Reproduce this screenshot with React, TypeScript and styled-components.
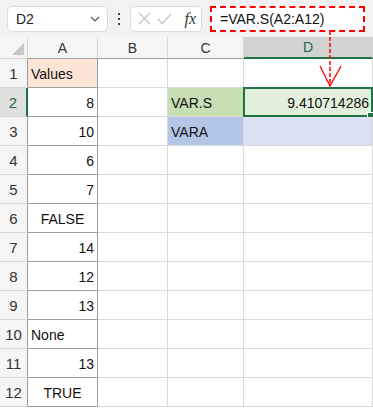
import React, { FC } from "react";
import styled, { createGlobalStyle } from "styled-components";

const GlobalStyle = createGlobalStyle`
  html, body {
    margin: 0;
    padding: 0;
    background: #ffffff;
  }
  body {
    font-family: "Liberation Sans", Arial, sans-serif;
    width: 373px;
    height: 408px;
    overflow: hidden;
  }
`;

type Align = "left" | "right" | "center";

interface CellData {
  text?: string;
  align?: Align;
  bg?: string;
}

const columns = ["A", "B", "C", "D"];
const colWidths = [28, 70, 70, 76, 129];

const rows: CellData[][] = [
  [{ text: "Values", align: "left", bg: "#fce4d6" }, {}, {}, {}],
  [{ text: "8", align: "right" }, {}, { text: "VAR.S", align: "left", bg: "#c6e0b4" }, { text: "9.410714286", align: "right", bg: "#e2efda" }],
  [{ text: "10", align: "right" }, {}, { text: "VARA", align: "left", bg: "#b4c6e7" }, { bg: "#d9e1f2" }],
  [{ text: "6", align: "right" }, {}, {}, {}],
  [{ text: "7", align: "right" }, {}, {}, {}],
  [{ text: "FALSE", align: "center" }, {}, {}, {}],
  [{ text: "14", align: "right" }, {}, {}, {}],
  [{ text: "12", align: "right" }, {}, {}, {}],
  [{ text: "13", align: "right" }, {}, {}, {}],
  [{ text: "None", align: "left" }, {}, {}, {}],
  [{ text: "13", align: "right" }, {}, {}, {}],
  [{ text: "TRUE", align: "center" }, {}, {}, {}],
];

const App: FC = () => {
  return (
    <>
      <GlobalStyle />
      <Page>
        <Toolbar>
          <NameBox>
            <span>D2</span>
            <svg width="10" height="6" viewBox="0 0 10 6">
              <path d="M1 1 L5 5 L9 1" fill="none" stroke="#555" strokeWidth="1.2" />
            </svg>
          </NameBox>
          <Dots>
            <i />
            <i />
            <i />
          </Dots>
          <FxBox>
            <svg width="13" height="13" viewBox="0 0 13 13">
              <path d="M1 1 L12 12 M12 1 L1 12" stroke="#c4c4c4" strokeWidth="1.2" />
            </svg>
            <svg width="15" height="12" viewBox="0 0 15 12">
              <path d="M1 6 L5 10.5 L14 1" fill="none" stroke="#c4c4c4" strokeWidth="1.2" />
            </svg>
            <Fx>fx</Fx>
          </FxBox>
          <FormulaBox>=VAR.S(A2:A12)</FormulaBox>
        </Toolbar>

        <Sheet>
          <Corner />
          {columns.map((c) => (
            <ColHeader key={c} $selected={c === "D"}>
              {c}
            </ColHeader>
          ))}
          {rows.map((row, r) => (
            <React.Fragment key={r}>
              <RowHeader $selected={r === 1}>{r + 1}</RowHeader>
              {row.map((cell, c) => (
                <Cell
                  key={c}
                  $align={cell.align || "left"}
                  $bg={cell.bg}
                  $boxed={c === 0}
                  $active={r === 1 && c === 3}
                >
                  {cell.text}
                  {r === 1 && c === 3 ? <FillHandle /> : null}
                </Cell>
              ))}
            </React.Fragment>
          ))}
        </Sheet>

        <Arrow width="30" height="58" viewBox="0 0 30 58">
          <path d="M11 0 L11 55" stroke="#ff0000" strokeWidth="1.5" strokeDasharray="4 2" />
          <path d="M1 35 L11 55 L22 35" fill="none" stroke="#ff0000" strokeWidth="1.3" />
        </Arrow>
      </Page>
    </>
  );
};

const Page = styled("div")`
  position: relative;
  width: 373px;
  height: 408px;
  overflow: hidden;
`;

const Toolbar = styled("div")`
  display: flex;
  align-items: center;
  height: 37px;
  padding: 0 8px 0 7px;
  box-sizing: border-box;
  background: #f2f2f2;
`;

const NameBox = styled("div")`
  display: flex;
  align-items: center;
  justify-content: space-between;
  width: 101px;
  height: 26px;
  box-sizing: border-box;
  padding: 0 7px 0 8px;
  background: #ffffff;
  border: 1px solid #dcdcdc;
  border-radius: 5px;
  font-size: 14px;
  color: #222;
`;

const Dots = styled("div")`
  display: flex;
  flex-direction: column;
  align-items: center;
  gap: 3px;
  width: 22px;
  i {
    display: block;
    width: 2px;
    height: 2px;
    background: #444;
  }
`;

const FxBox = styled("div")`
  display: flex;
  align-items: center;
  gap: 6px;
  width: 72px;
  height: 26px;
  box-sizing: border-box;
  padding: 0 5px 0 7px;
  background: #ffffff;
  border: 1px solid #dcdcdc;
  border-radius: 5px;
`;

const Fx = styled("span")`
  margin-left: auto;
  font-family: "Liberation Serif", "Times New Roman", serif;
  font-style: italic;
  font-size: 16px;
  color: #333;
`;

const FormulaBox = styled("div")`
  flex: 1;
  display: flex;
  align-items: center;
  margin-left: 8px;
  height: 26px;
  box-sizing: border-box;
  padding: 0 8px;
  background: #ffffff;
  border: 2px dashed #ff0000;
  font-size: 14px;
  color: #111;
`;

const Sheet = styled("div")`
  display: grid;
  grid-template-columns: ${colWidths.map((w) => `${w}px`).join(" ")};
  grid-template-rows: 22px repeat(12, 29px);
  font-size: 14px;
  color: #111;
`;

const HeaderBase = styled("div")`
  display: flex;
  align-items: center;
  justify-content: center;
  box-sizing: border-box;
  background: #f5f5f5;
  border-right: 1px solid #d6d6d6;
  border-bottom: 1px solid #d6d6d6;
  font-size: 14px;
`;

const Corner = styled(HeaderBase)`
  position: relative;
  &::after {
    content: "";
    position: absolute;
    right: 3px;
    bottom: 3px;
    border-left: 12px solid transparent;
    border-bottom: 12px solid #c8c8c8;
  }
`;

const ColHeader = styled(HeaderBase)<{ $selected?: boolean }>`
  background: ${(p) => (p.$selected ? "#d2d2d2" : "#f5f5f5")};
  color: ${(p) => (p.$selected ? "#1d6b41" : "#333")};
  border-bottom: ${(p) => (p.$selected ? "2px solid #217346" : "1px solid #9e9e9e")};
`;

const RowHeader = styled(HeaderBase)<{ $selected?: boolean }>`
  background: ${(p) => (p.$selected ? "#e0e0e0" : "#f5f5f5")};
  color: ${(p) => (p.$selected ? "#1d6b41" : "#333")};
  border-right: ${(p) => (p.$selected ? "2px solid #217346" : "1px solid #9e9e9e")};
  font-size: 15px;
`;

const Cell = styled("div")<{ $align: Align; $bg?: string; $boxed?: boolean; $active?: boolean }>`
  position: relative;
  display: flex;
  align-items: flex-end;
  justify-content: ${(p) =>
    p.$align === "right" ? "flex-end" : p.$align === "center" ? "center" : "flex-start"};
  box-sizing: border-box;
  padding: 0 3px 5px 3px;
  background: ${(p) => p.$bg || "#ffffff"};
  border-right: 1px solid ${(p) => (p.$boxed ? "#9e9e9e" : "#dadada")};
  border-bottom: 1px solid ${(p) => (p.$boxed ? "#9e9e9e" : "#dadada")};
  ${(p) =>
    p.$active &&
    `
    outline: 2px solid #217346;
    outline-offset: -2px;
    margin-left: -1px;
    margin-top: -1px;
    height: 30px;
  `}
`;

const FillHandle = styled("span")`
  position: absolute;
  right: -2px;
  bottom: -3px;
  width: 5px;
  height: 5px;
  background: #217346;
  border: 1px solid #ffffff;
`;

const Arrow = styled("svg")`
  position: absolute;
  left: 319px;
  top: 31px;
`;

export default App;
